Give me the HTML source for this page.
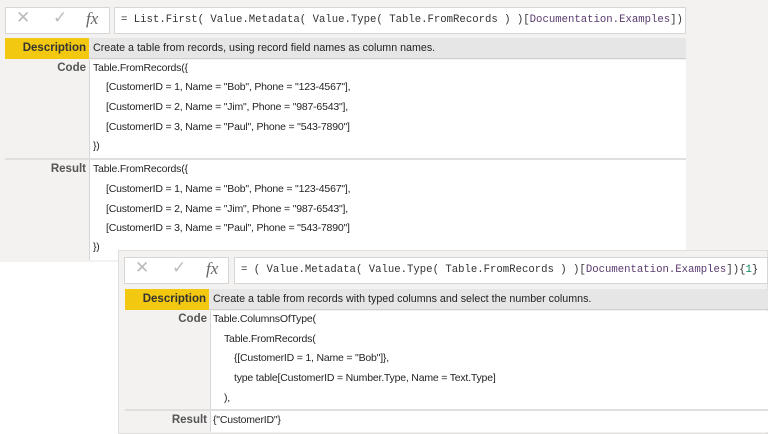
<!DOCTYPE html>
<html><head><style>
*{margin:0;padding:0;box-sizing:border-box}
body{width:768px;height:434px;background:#fff;position:relative;overflow:hidden;font-family:"Liberation Sans",sans-serif;font-size:11px;color:#252423}
.a{position:absolute}
.panel{background:#f3f2f1;border:1px solid #e1dfdd}
.fb{background:#fff;border:1px solid #d6d6d6}
.mono{font-family:"Liberation Mono",monospace;font-size:10.65px;color:#333;white-space:nowrap;line-height:24px;padding-left:6px;overflow:hidden}
.lab{font-weight:bold;color:#555;text-align:right;padding-right:3px;font-size:11.5px}
.desc{background:#e6e6e6;border-bottom:1px solid #d0d0d0}
.y{background:#f2c811;color:#333}
.cell{background:#fff;border-left:1px solid #d6d6d6}
.ln{position:absolute;white-space:nowrap;font-size:10.5px;letter-spacing:-0.2px}
.dt{font-size:10.7px}
.ic{color:#bbb;font-size:17px}
</style></head><body>
<!-- panel 1 -->
<div class="a panel" style="left:0;top:0;width:768px;height:262px;border:none"></div>
<div class="a fb" style="left:5px;top:7px;width:105px;height:27px"></div>
<div class="a ic" style="left:16px;top:8px">✕</div>
<div class="a ic" style="left:53px;top:8px">✓</div>
<div class="a" style="left:86px;top:9px;font-family:'Liberation Serif',serif;font-style:italic;font-size:17px;color:#666">fx</div>
<div class="a fb mono" style="left:114px;top:7px;width:572px;height:27px">= List.First( Value.Metadata( Value.Type( Table.FromRecords ) )[<span style="color:#5a3a6e">Documentation.Examples</span>])</div>
<div class="a desc" style="left:5px;top:38px;width:681px;height:21px"></div>
<div class="a y lab" style="left:5px;top:38px;width:84px;height:21px;line-height:21px">Description</div>
<div class="a dt" style="left:93px;top:38px;line-height:21px">Create a table from records, using record field names as column names.</div>
<div class="a cell" style="left:89px;top:60px;width:597px;height:98px"></div>
<div class="a lab" style="left:5px;top:62px;width:84px">Code</div>
<div class="a" style="left:5px;top:158px;width:681px;height:2px;background:#e1dfdd"></div>
<div class="a cell" style="left:89px;top:160px;width:597px;height:100px"></div>
<div class="a lab" style="left:5px;top:163px;width:84px">Result</div>
<div class="a ln" style="left:93px;top:62px">Table.FromRecords({</div>
<div class="a ln" style="left:106px;top:81px">[CustomerID = 1, Name = "Bob", Phone = "123-4567"],</div>
<div class="a ln" style="left:106px;top:101px">[CustomerID = 2, Name = "Jim", Phone = "987-6543"],</div>
<div class="a ln" style="left:106px;top:121px">[CustomerID = 3, Name = "Paul", Phone = "543-7890"]</div>
<div class="a ln" style="left:93px;top:140px">})</div>
<div class="a ln" style="left:93px;top:163px">Table.FromRecords({</div>
<div class="a ln" style="left:106px;top:183px">[CustomerID = 1, Name = "Bob", Phone = "123-4567"],</div>
<div class="a ln" style="left:106px;top:203px">[CustomerID = 2, Name = "Jim", Phone = "987-6543"],</div>
<div class="a ln" style="left:106px;top:222px">[CustomerID = 3, Name = "Paul", Phone = "543-7890"]</div>
<div class="a ln" style="left:93px;top:241px">})</div>
<!-- panel 2 -->
<div class="a panel" style="left:118px;top:250px;width:650px;height:184px;border:1px solid #e1dfdd"></div>
<div class="a fb" style="left:124px;top:257px;width:105px;height:27px"></div>
<div class="a ic" style="left:135px;top:258px">✕</div>
<div class="a ic" style="left:172px;top:258px">✓</div>
<div class="a" style="left:206px;top:259px;font-family:'Liberation Serif',serif;font-style:italic;font-size:17px;color:#666">fx</div>
<div class="a fb mono" style="left:234px;top:257px;width:534px;height:27px">= ( Value.Metadata( Value.Type( Table.FromRecords ) )[<span style="color:#5a3a6e">Documentation.Examples</span>]){<span style="color:#098658">1</span>}</div>
<div class="a desc" style="left:125px;top:289px;width:643px;height:21px"></div>
<div class="a y lab" style="left:125px;top:289px;width:84px;height:21px;line-height:21px">Description</div>
<div class="a dt" style="left:213px;top:289px;line-height:21px">Create a table from records with typed columns and select the number columns.</div>
<div class="a cell" style="left:210px;top:311px;width:558px;height:98px"></div>
<div class="a lab" style="left:125px;top:313px;width:85px">Code</div>
<div class="a" style="left:125px;top:409px;width:643px;height:2px;background:#e1dfdd"></div>
<div class="a cell" style="left:210px;top:411px;width:558px;height:21px"></div>
<div class="a lab" style="left:125px;top:414px;width:85px">Result</div>
<div class="a ln" style="left:213px;top:313px">Table.ColumnsOfType(</div>
<div class="a ln" style="left:224px;top:333px">Table.FromRecords(</div>
<div class="a ln" style="left:234px;top:352px">{[CustomerID = 1, Name = "Bob"]},</div>
<div class="a ln" style="left:234px;top:372px">type table[CustomerID = Number.Type, Name = Text.Type]</div>
<div class="a ln" style="left:224px;top:392px">),</div>
<div class="a ln" style="left:213px;top:414px">{"CustomerID"}</div>
</body></html>
